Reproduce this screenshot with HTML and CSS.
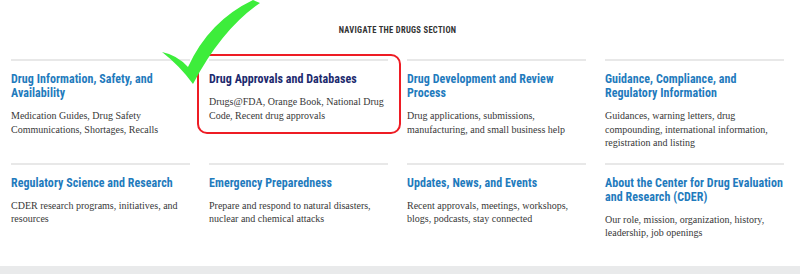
FILE: index.html
```html
<!DOCTYPE html>
<html lang="en">
<head>
  <meta charset="UTF-8" />
  <title>Navigate the Drugs Section</title>
  <link rel="stylesheet" href="styles.css">
</head>
<body>
  <section class="nav-section">
    <h2 class="section-title">Navigate the Drugs Section</h2>

    <div class="card-grid">
      <div class="card">
        <h3><a href="#">Drug Information, Safety, and Availability</a></h3>
        <p>Medication Guides, Drug Safety Communications, Shortages, Recalls</p>
      </div>
      <div class="card card-marked">
        <h3><a href="#">Drug Approvals and Databases</a></h3>
        <p>Drugs@FDA, Orange Book, National Drug Code, Recent drug approvals</p>
      </div>
      <div class="card">
        <h3><a href="#">Drug Development and Review Process</a></h3>
        <p>Drug applications, submissions, manufacturing, and small business help</p>
      </div>
      <div class="card">
        <h3><a href="#">Guidance, Compliance, and Regulatory Information</a></h3>
        <p>Guidances, warning letters, drug compounding, international information, registration and listing</p>
      </div>
      <div class="card">
        <h3><a href="#">Regulatory Science and Research</a></h3>
        <p>CDER research programs, initiatives, and resources</p>
      </div>
      <div class="card">
        <h3><a href="#">Emergency Preparedness</a></h3>
        <p>Prepare and respond to natural disasters, nuclear and chemical attacks</p>
      </div>
      <div class="card">
        <h3><a href="#">Updates, News, and Events</a></h3>
        <p>Recent approvals, meetings, workshops, blogs, podcasts, stay connected</p>
      </div>
      <div class="card">
        <h3><a href="#">About the Center for Drug Evaluation and Research (CDER)</a></h3>
        <p>Our role, mission, organization, history, leadership, job openings</p>
      </div>
    </div>

    <!-- hand-drawn check over the approvals card -->
    <svg class="checkmark" width="110" height="90" viewBox="0 0 110 90">
      <path d="M7 52 Q22 55 33 67 Q54 21 98 0 L105 3 Q67 29 38 84 Q25 66 7 52 Z" fill="#3ded3b" />
    </svg>
  </section>

  <footer class="page-footer"></footer>
</body>
</html>
```

FILE: styles.css
```css
body {
  margin: 0;
  background: #fff;
  font-family: 'Liberation Serif', serif;
}

.nav-section {
  position: relative;
  padding: 25px 16px 26px 11px;
}

.section-title {
  margin: 0 0 24px;
  text-align: center;
  font-family: 'Roboto Condensed', 'Roboto', sans-serif;
  font-size: 8.5px;
  line-height: 10px;
  font-weight: bold;
  letter-spacing: 0.3px;
  text-transform: uppercase;
  color: #333;
}

.card-grid {
  display: grid;
  grid-template-columns: repeat(4, 1fr);
  column-gap: 19px;
  row-gap: 13px;
}

.card {
  position: relative;
  border-top: 2px solid #e8e8e8;
  padding-top: 11px;
}

.card h3 {
  margin: 0 0 9px;
  font-family: 'Roboto Condensed', 'Roboto', sans-serif;
  font-size: 12px;
  line-height: 14px;
  font-weight: bold;
  letter-spacing: 0.05px;
}

.card h3 a {
  color: #1f7bbd;
  text-decoration: none;
}

.card p {
  margin: 0;
  font-size: 10px;
  line-height: 13.5px;
  color: #383838;
}

.card-marked {
  align-self: start;
}

.card-marked h3 a {
  color: #1c2a6e;
}

.card-marked::after {
  content: '';
  position: absolute;
  left: -12px;
  right: -13px;
  top: -7px;
  bottom: -12px;
  border: 2px solid #ee1c24;
  border-radius: 10px;
}

.checkmark {
  position: absolute;
  left: 155px;
  top: 0;
}

.page-footer {
  height: 8px;
  background: #e9eaeb;
}
```
